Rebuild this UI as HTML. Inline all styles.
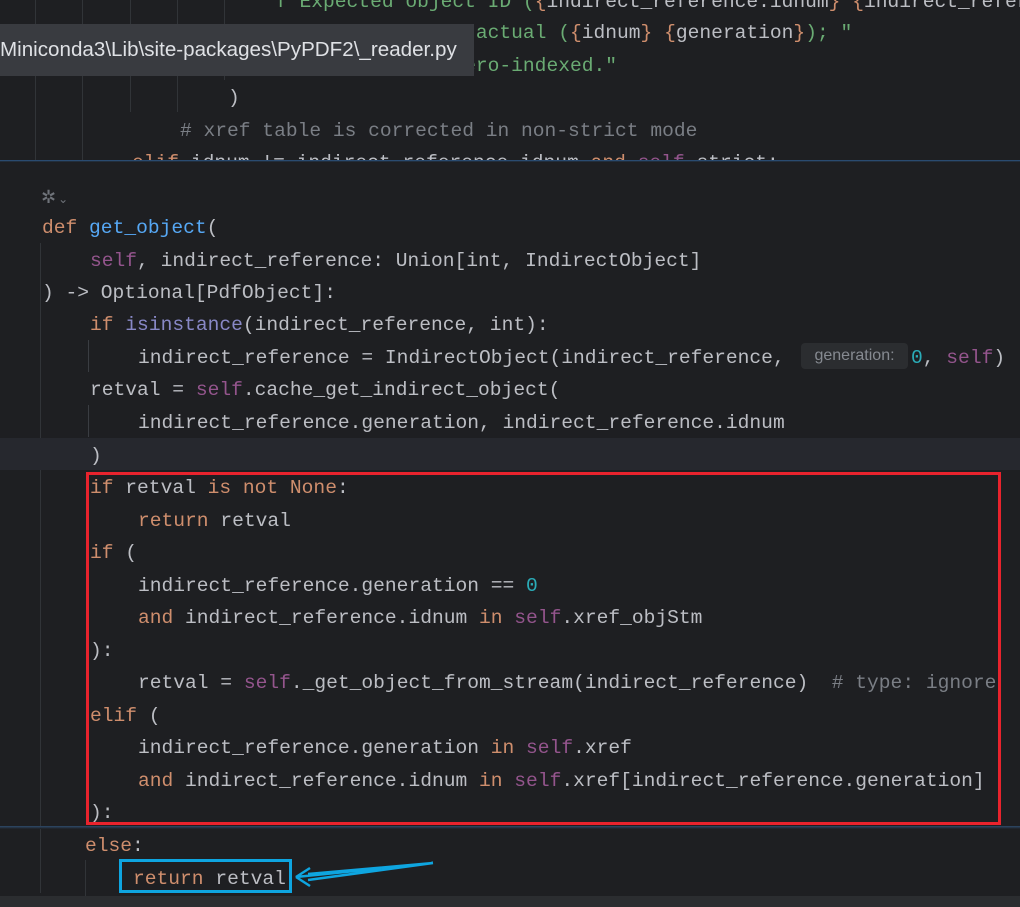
<!DOCTYPE html>
<html><head><meta charset="utf-8"><style>
body{margin:0;width:1020px;height:907px;background:#1e1f22;overflow:hidden;position:relative;font-family:"Liberation Mono",monospace;}
.l{position:absolute;height:32px;line-height:32px;font-size:19.6px;color:#bcbec4;white-space:pre;letter-spacing:0;margin-top:2px}
.k{color:#cf8e6d}.f{color:#56a8f5}.s{color:#94558d}.n{color:#2aacb8}.c{color:#7a7e85}.g{color:#6aab73}
.g2{position:absolute;width:1px;background:#313438}
</style></head><body>
<!-- top region -->
<div class="g2" style="left:35px;top:0;height:160px"></div>
<div class="g2" style="left:82px;top:0;height:160px"></div>
<div class="g2" style="left:130px;top:0;height:112px"></div>
<div class="g2" style="left:177px;top:0;height:112px"></div>
<div class="g2" style="left:224px;top:0;height:80px"></div>
<div class="l g" style="left:276px;top:-16px">f"Expected object ID (<span class="k">{</span><span style="color:#bcbec4">indirect_reference.idnum</span><span class="k">}</span> <span class="k">{</span><span style="color:#bcbec4">indirect_refere</span></div>
<div class="l g" style="left:276px;top:15px">f"does not match actual (<span class="k">{</span><span style="color:#bcbec4">idnum</span><span class="k">}</span> <span class="k">{</span><span style="color:#bcbec4">generation</span><span class="k">}</span>); "</div>
<div class="l g" style="left:276px;top:48px">"xref table is zero-indexed."</div>
<div class="l" style="left:228px;top:80px">)</div>
<div class="l c" style="left:180px;top:113px"># xref table is corrected in non-strict mode</div>
<div class="l" style="left:132px;top:145px"><span class="k">elif</span> idnum != indirect_reference.idnum <span class="k">and</span> <span class="s">self</span>.strict:</div>
<div style="position:absolute;left:0;top:160px;width:1020px;height:2px;background:linear-gradient(#2e5a8a,#1e1f22)"></div>
<div style="position:absolute;left:0;top:162px;width:1020px;height:735px;background:#1e1f22"></div>
<!-- tooltip -->
<div style="position:absolute;left:0;top:24px;width:474px;height:52px;background:#393b40;color:#dfe1e5;font-family:'Liberation Sans',sans-serif;font-size:20.6px;line-height:52px;white-space:nowrap;overflow:hidden">Miniconda3\Lib\site-packages\PyPDF2\_reader.py</div>
<!-- icon -->
<div style="position:absolute;left:41px;top:189px;color:#6f737a;font-size:18px;line-height:18px;font-family:'DejaVu Sans',sans-serif">✲<span style="font-size:12px;margin-left:2px">⌄</span></div>
<!-- guides -->
<div class="g2" style="left:40px;top:243px;height:650px"></div>
<div class="g2" style="left:88px;top:340px;height:32px;background:#3a3d42"></div>
<div class="g2" style="left:88px;top:405px;height:32px;background:#3a3d42"></div>
<!-- current line -->
<div style="position:absolute;left:0;top:438px;width:1020px;height:32px;background:#26282e"></div>
<div class="l" style="left:42px;top:210px"><span class="k">def</span> <span class="f">get_object</span>(</div>
<div class="l" style="left:90px;top:243px"><span class="s">self</span>, indirect_reference: Union[int, IndirectObject]</div>
<div class="l" style="left:42px;top:275px">) -&gt; Optional[PdfObject]:</div>
<div class="l" style="left:90px;top:307px"><span class="k">if</span> <span style="color:#8888c6">isinstance</span>(indirect_reference, int):</div>
<div class="l" style="left:138px;top:340px">indirect_reference = IndirectObject(indirect_reference, </div>
<div style="position:absolute;left:801px;top:343px;width:107px;height:26px;background:#2b2d30;border-radius:4px;color:#868a91;font-family:'Liberation Sans',sans-serif;font-size:16px;line-height:26px;text-align:center">generation:</div>
<div class="l" style="left:911px;top:340px"><span class="n">0</span>, <span class="s">self</span>)</div>
<div class="l" style="left:90px;top:372px">retval = <span class="s">self</span>.cache_get_indirect_object(</div>
<div class="l" style="left:138px;top:405px">indirect_reference.generation, indirect_reference.idnum</div>
<div class="l" style="left:90px;top:438px">)</div>
<div class="l" style="left:90px;top:470px"><span class="k">if</span> retval <span class="k">is not None</span>:</div>
<div class="l" style="left:138px;top:503px"><span class="k">return</span> retval</div>
<div class="l" style="left:90px;top:535px"><span class="k">if</span> (</div>
<div class="l" style="left:138px;top:568px">indirect_reference.generation == <span class="n">0</span></div>
<div class="l" style="left:138px;top:600px"><span class="k">and</span> indirect_reference.idnum <span class="k">in</span> <span class="s">self</span>.xref_objStm</div>
<div class="l" style="left:90px;top:633px">):</div>
<div class="l" style="left:138px;top:665px">retval = <span class="s">self</span>._get_object_from_stream(indirect_reference)  <span class="c"># type: ignore</span></div>
<div class="l" style="left:90px;top:698px"><span class="k">elif</span> (</div>
<div class="l" style="left:138px;top:730px">indirect_reference.generation <span class="k">in</span> <span class="s">self</span>.xref</div>
<div class="l" style="left:138px;top:763px"><span class="k">and</span> indirect_reference.idnum <span class="k">in</span> <span class="s">self</span>.xref[indirect_reference.generation]</div>
<div class="l" style="left:90px;top:795px">):</div>
<div style="position:absolute;left:86px;top:472px;width:909px;height:347px;border:3px solid #e8232d"></div>
<div style="position:absolute;left:0;top:826px;width:1020px;height:3px;background:linear-gradient(#2e4a6a,#1e1f22)"></div>
<div class="l" style="left:85px;top:828px"><span class="k">else</span>:</div>
<div class="g2" style="left:85px;top:860px;height:36px"></div>
<div class="l" style="left:133px;top:861px"><span class="k">return</span> retval</div>
<div style="position:absolute;left:119px;top:859px;width:167px;height:28px;border:3px solid #0ea5e0"></div>
<svg style="position:absolute;left:0;top:0" width="1020" height="907"><path d="M433 863 L296 877 L310 868 M296 877 L310 886 M433 863 L308 874 M433 863 L308 880" stroke="#0ea5e0" stroke-width="2.5" fill="none"/></svg>
<div style="position:absolute;left:0;top:896px;width:1020px;height:11px;background:#2b2d30"></div>
</body></html>
